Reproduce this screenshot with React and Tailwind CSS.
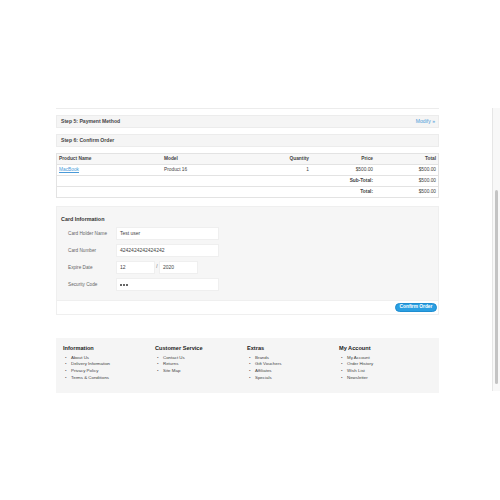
import React from "react";

const footerCols = [
    { title: "Information", items: ["About Us", "Delivery Information", "Privacy Policy", "Terms & Conditions"] },
    { title: "Customer Service", items: ["Contact Us", "Returns", "Site Map"] },
    { title: "Extras", items: ["Brands", "Gift Vouchers", "Affiliates", "Specials"] },
    { title: "My Account", items: ["My Account", "Order History", "Wish List", "Newsletter"] },
];

const cardFields = [
    { label: "Card Holder Name", value: "Test user" },
    { label: "Card Number", value: "4242424242424242" },
];

const StepHeading = ({ title, modify }) => (
    <div className="mt-[6px] h-[13px] flex items-center justify-between pl-[4px] pr-[3px] bg-[#f5f5f5] border border-[#ececec] text-[5.1px] font-bold text-[#444]">
        <span>{title}</span>
        {modify && <span className="font-normal text-[#4a9ad8]">Modify »</span>}
    </div>
);

const Field = ({ label, children }) => (
    <div className="flex items-center h-[13px] mt-[4px]">
        <span className="w-[48px] pl-[11px] text-[4.7px] text-[#666] box-content">{label}</span>
        {children}
    </div>
);

const Input = ({ children, className = "" }) => (
    <div className={`h-[13px] flex items-center pl-[3px] bg-white border border-[#efefef] text-[5px] text-[#444] ${className}`}>
        {children}
    </div>
);

export default function App() {
    return (
        <div className="w-[500px] h-[500px] bg-white flex font-['Liberation_Sans',Arial,sans-serif]">
            {/* PAGE */}
            <div className="flex-1 pt-[108px]">
                <div className="w-[383px] ml-[56px] border-t border-[#ececec]">
                    <StepHeading title="Step 5: Payment Method" modify />
                    <StepHeading title="Step 6: Confirm Order" />

                    {/* ORDER TABLE */}
                    <div className="mt-[6px] border border-[#e3e3e3] text-[4.8px] text-[#444]">
                        <div className="grid grid-cols-[105px_100px_50px_64px_1fr] h-[11px] items-center bg-[#f7f7f7] font-bold border-b border-[#e3e3e3]">
                            <span className="pl-[2px]">Product Name</span>
                            <span className="pl-[2px]">Model</span>
                            <span className="text-right pr-[3px]">Quantity</span>
                            <span className="text-right pr-[3px]">Price</span>
                            <span className="text-right pr-[2px]">Total</span>
                        </div>
                        <div className="grid grid-cols-[105px_100px_50px_64px_1fr] h-[11px] items-center border-b border-[#e3e3e3]">
                            <span className="pl-[2px] text-[#4a9ad8] underline">MacBook</span>
                            <span className="pl-[2px]">Product 16</span>
                            <span className="text-right pr-[3px]">1</span>
                            <span className="text-right pr-[3px]">$500.00</span>
                            <span className="text-right pr-[2px]">$500.00</span>
                        </div>
                        <div className="grid grid-cols-[319px_1fr] h-[11px] items-center border-b border-[#e3e3e3]">
                            <span className="text-right pr-[3px] font-bold">Sub-Total:</span>
                            <span className="text-right pr-[2px]">$500.00</span>
                        </div>
                        <div className="grid grid-cols-[319px_1fr] h-[10px] items-center">
                            <span className="text-right pr-[3px] font-bold">Total:</span>
                            <span className="text-right pr-[2px]">$500.00</span>
                        </div>
                    </div>

                    {/* CARD INFO */}
                    <div className="mt-[8px] border border-[#efefef]">
                        <div className="bg-[#f6f6f6] h-[93px] pt-[9px]">
                            <div className="pl-[4px] text-[5.4px] leading-[7px] font-bold text-[#333]">Card Information</div>
                            <div className="mt-[1px]">
                                {cardFields.map((f) => (
                                    <Field key={f.label} label={f.label}>
                                        <Input className="w-[103px]">{f.value}</Input>
                                    </Field>
                                ))}
                                <Field label="Expire Date">
                                    <Input className="w-[39px]">12</Input>
                                    <span className="w-[4px] text-center text-[4.6px] text-[#666]">/</span>
                                    <Input className="w-[39px]">2020</Input>
                                </Field>
                                <Field label="Security Code">
                                    <Input className="w-[103px] gap-[1px]">
                                        <span className="w-[2px] h-[2px] rounded-full bg-[#333]" />
                                        <span className="w-[2px] h-[2px] rounded-full bg-[#333]" />
                                        <span className="w-[2px] h-[2px] rounded-full bg-[#333]" />
                                    </Input>
                                </Field>
                            </div>
                        </div>
                        <div className="h-[14px] flex items-center justify-end pr-[1px] bg-white border-t border-[#efefef]">
                            <button className="h-[9px] w-[42px] rounded-full bg-[#2a9fe2] border border-[#1f8dd0] text-white text-[4.8px] font-bold leading-none">
                                Confirm Order
                            </button>
                        </div>
                    </div>

                    {/* FOOTER */}
                    <div className="mt-[23px] h-[55px] bg-[#f5f5f5] grid grid-cols-[92px_92px_92px_1fr] pl-[7px] pt-[7px]">
                        {footerCols.map((col) => (
                            <div key={col.title}>
                                <div className="text-[5.6px] font-bold text-[#222] leading-[7px]">{col.title}</div>
                                <ul className="mt-[2.5px] text-[4.4px] text-[#444]">
                                    {col.items.map((it) => (
                                        <li key={it} className="h-[6.8px] leading-[6.8px] flex">
                                            <span className="w-[8px] pl-[2px]">•</span>
                                            {it}
                                        </li>
                                    ))}
                                </ul>
                            </div>
                        ))}
                    </div>
                </div>
            </div>

            {/* SCROLLBAR */}
            <div className="w-[8px] pt-[108px]">
                <div className="h-[283px] bg-[#f8f8f8] border-l border-[#e6e6e6] flex flex-col justify-end items-center pb-[7px]">
                    <div className="w-[3px] h-[194px] rounded-full bg-[#c4c4c4]" />
                </div>
            </div>
        </div>
    );
}
